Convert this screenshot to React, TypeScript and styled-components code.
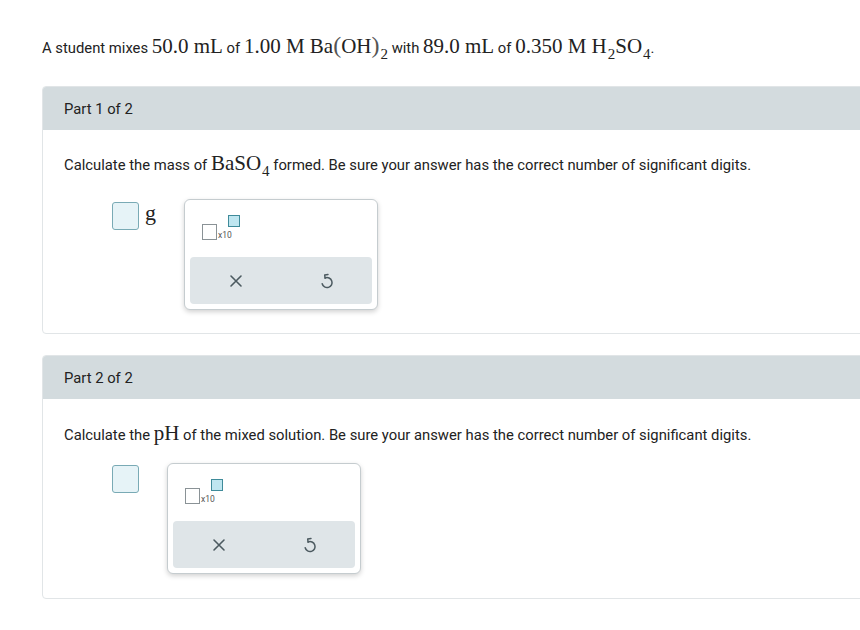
import React from "react";
import styled, { createGlobalStyle } from "styled-components";

const Global = createGlobalStyle`
  html, body { margin: 0; padding: 0; background: #fff; }
  body { font-family: Roboto, "Liberation Sans", sans-serif; color: #222; overflow: hidden; }
`;

const Page = styled.div`
  width: 860px;
  height: 630px;
  overflow: hidden;
  padding: 29px 0 0 42px;
  box-sizing: border-box;
`;

const Intro = styled.div`
  font-size: 14.8px;
  line-height: 32px;
  height: 32px;
  white-space: nowrap;
  margin-bottom: 25px;
`;

const M = styled.span`
  font-family: "Liberation Serif", "Times New Roman", serif;
  font-size: 21px;
  color: #222;
`;

const Sub = styled.sub`
  font-size: 15px;
  vertical-align: -6px;
  line-height: 0;
  margin-left: 1px;
`;

const Paren = styled.span`
  font-size: 24px;
  color: #555;
`;

const Card = styled.section<{ $mt?: number }>`
  width: 840px;
  border: 1px solid #e1e5e7;
  border-radius: 4px;
  margin-top: ${(p) => p.$mt ?? 0}px;
  overflow: hidden;
`;

const CardHeader = styled.div`
  height: 43px;
  background: #d3dbde;
  display: flex;
  align-items: center;
  padding-left: 21px;
  font-size: 14.8px;
  color: #222;
`;

const CardBody = styled.div<{ $pt: number; $pb: number }>`
  padding: ${(p) => p.$pt}px 0 ${(p) => p.$pb}px 21px;
`;

const Question = styled.div`
  font-size: 14.8px;
  line-height: 26px;
  height: 26px;
  white-space: nowrap;
`;

const AnswerRow = styled.div<{ $mt: number }>`
  display: flex;
  align-items: flex-start;
  margin-top: ${(p) => p.$mt}px;
  padding-left: 48px;
`;

const AnswerGroup = styled.div<{ $mt: number }>`
  display: flex;
  align-items: center;
  gap: 6px;
  margin-top: ${(p) => p.$mt}px;
  margin-right: 28px;
`;

const AnswerBox = styled.div`
  width: 25px;
  height: 26px;
  border: 1px solid #79aab5;
  border-radius: 3px;
  background: #e6f3f7;
`;

const Unit = styled.span`
  font-family: "Liberation Serif", "Times New Roman", serif;
  font-size: 22px;
  margin-top: -7px;
  color: #222;
`;

const Panel = styled.div`
  width: 194px;
  height: 111px;
  border: 1px solid #c5cccf;
  border-radius: 6px;
  box-shadow: 0 2px 5px rgba(0, 0, 0, 0.18);
  padding: 0 5px 5px;
  box-sizing: border-box;
  display: flex;
  flex-direction: column;
  background: #fff;
`;

const SciArea = styled.div`
  height: 57px;
  display: flex;
  align-items: flex-start;
  padding: 15px 0 0 12px;
  box-sizing: border-box;
`;

const Sci = styled.div`
  display: flex;
  align-items: flex-end;
  height: 25px;
`;

const Base = styled.div`
  width: 13px;
  height: 14px;
  border: 1px solid #8a9296;
  background: #fff;
`;

const Times = styled.span`
  font-size: 8.5px;
  color: #555;
  line-height: 10px;
  margin-left: 1px;
`;

const Exp = styled.div`
  width: 10px;
  height: 10px;
  border: 1px solid #3f8b9a;
  background: #bfe6f0;
  align-self: flex-start;
  margin-left: -4px;
`;

const ButtonBar = styled.div`
  flex: 1;
  border-radius: 4px;
  background: #dfe5e8;
  display: grid;
  grid-template-columns: 1fr 1fr;
`;

const IconButton = styled.button`
  border: none;
  background: transparent;
  display: flex;
  align-items: center;
  justify-content: center;
  padding: 0;
  cursor: pointer;
  color: #4c5a60;
`;

const CloseIcon = () => (
  <svg width="14" height="14" viewBox="0 0 14 14" fill="none" stroke="currentColor" strokeWidth="1.6" strokeLinecap="round">
    <path d="M2 2 L12 12 M12 2 L2 12" />
  </svg>
);

const UndoIcon = () => (
  <svg width="16" height="18" viewBox="0 0 16 18" fill="none" stroke="currentColor" strokeWidth="1.5" strokeLinecap="round" strokeLinejoin="round">
    <path d="M9 2.4 L5.7 3 L6.1 6.2" />
    <path d="M6.1 6 A5 5 0 1 1 3.2 11.8" />
  </svg>
);

const Toolbox = () => (
  <Panel>
    <SciArea>
      <Sci>
        <Base />
        <Times>x10</Times>
        <Exp />
      </Sci>
    </SciArea>
    <ButtonBar>
      <IconButton aria-label="clear">
        <CloseIcon />
      </IconButton>
      <IconButton aria-label="undo">
        <UndoIcon />
      </IconButton>
    </ButtonBar>
  </Panel>
);

export default function App() {
  return (
    <>
      <Global />
      <Page>
        <Intro>
          A student mixes <M>50.0 mL</M> of <M>1.00 M Ba<Paren>(</Paren>OH<Paren>)</Paren><Sub>2</Sub></M> with{" "}
          <M>89.0 mL</M> of <M>0.350 M H<Sub>2</Sub>SO<Sub>4</Sub></M>.
        </Intro>
        <Card>
          <CardHeader>Part 1 of 2</CardHeader>
          <CardBody $pt={20} $pb={23}>
            <Question>
              Calculate the mass of <M>BaSO<Sub>4</Sub></M> formed. Be sure your answer has the correct number of significant digits.
            </Question>
            <AnswerRow $mt={23}>
              <AnswerGroup $mt={3}>
                <AnswerBox />
                <Unit>g</Unit>
              </AnswerGroup>
              <Toolbox />
            </AnswerRow>
          </CardBody>
        </Card>
        <Card $mt={21}>
          <CardHeader>Part 2 of 2</CardHeader>
          <CardBody $pt={21} $pb={24}>
            <Question>
              Calculate the <M>pH</M> of the mixed solution. Be sure your answer has the correct number of significant digits.
            </Question>
            <AnswerRow $mt={17}>
              <AnswerGroup $mt={2}>
                <AnswerBox />
              </AnswerGroup>
              <Toolbox />
            </AnswerRow>
          </CardBody>
        </Card>
      </Page>
    </>
  );
}
